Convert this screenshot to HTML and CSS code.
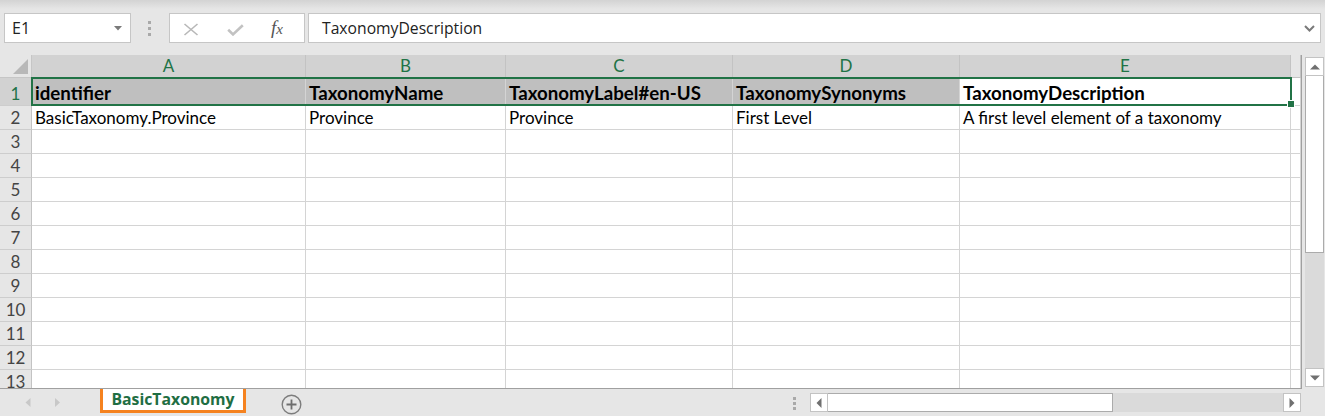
FILE: index.html
```html
<!DOCTYPE html>
<html>
<head>
<meta charset="utf-8">
<title>BasicTaxonomy</title>
<link rel="stylesheet" href="styles.css">
</head>
<body>
<div class="app">
  <div class="topbar">
    <div class="namebox">
      <span>E1</span>
      <svg class="nb-arrow" width="8" height="5" viewBox="0 0 8 5"><polygon points="0,0 8,0 4,4.5" fill="#7a7a7a"/></svg>
    </div>
    <div class="grip"><i></i><i></i><i></i></div>
    <div class="fxgroup">
      <svg class="ic-x" width="16" height="13" viewBox="0 0 16 13"><path d="M1.5 1 L14.5 12 M14.5 1 L1.5 12" stroke="#b8b8b8" stroke-width="1.6" fill="none"/></svg>
      <svg class="ic-check" width="17" height="12" viewBox="0 0 17 12"><path d="M1.2 5.8 L6 10.4 L15.8 1.2" stroke="#c2c2c2" stroke-width="2.6" fill="none"/></svg>
      <span class="fx">f<span class="fxx">x</span></span>
    </div>
    <div class="formula">
      <span>TaxonomyDescription</span>
      <svg width="11" height="7" viewBox="0 0 11 7"><path d="M1 1 L5.5 5.5 L10 1" stroke="#7a7a7a" stroke-width="2" fill="none"/></svg>
    </div>
  </div>

  <div class="main">
    <div class="sheet">
      <div class="grid">
        <div class="corner"><svg width="31" height="22" viewBox="0 0 31 22"><polygon points="13,19 28,19 28,4" fill="#b8b8b8"/></svg></div>
        <div class="ch sel">A</div>
        <div class="ch sel">B</div>
        <div class="ch sel">C</div>
        <div class="ch sel">D</div>
        <div class="ch sel">E</div>
        <div class="ch"></div>

        <div class="rh sel">1</div>
        <div class="c hd fill">identifier</div>
        <div class="c hd fill">TaxonomyName</div>
        <div class="c hd fill">TaxonomyLabel#en-US</div>
        <div class="c hd fill">TaxonomySynonyms</div>
        <div class="c hd">TaxonomyDescription</div>
        <div class="c"></div>

        <div class="rh">2</div>
        <div class="c">BasicTaxonomy.Province</div>
        <div class="c">Province</div>
        <div class="c">Province</div>
        <div class="c">First Level</div>
        <div class="c">A first level element of a taxonomy</div>
        <div class="c"></div>

        <div class="rh">3</div><div class="c"></div><div class="c"></div><div class="c"></div><div class="c"></div><div class="c"></div><div class="c"></div>
        <div class="rh">4</div><div class="c"></div><div class="c"></div><div class="c"></div><div class="c"></div><div class="c"></div><div class="c"></div>
        <div class="rh">5</div><div class="c"></div><div class="c"></div><div class="c"></div><div class="c"></div><div class="c"></div><div class="c"></div>
        <div class="rh">6</div><div class="c"></div><div class="c"></div><div class="c"></div><div class="c"></div><div class="c"></div><div class="c"></div>
        <div class="rh">7</div><div class="c"></div><div class="c"></div><div class="c"></div><div class="c"></div><div class="c"></div><div class="c"></div>
        <div class="rh">8</div><div class="c"></div><div class="c"></div><div class="c"></div><div class="c"></div><div class="c"></div><div class="c"></div>
        <div class="rh">9</div><div class="c"></div><div class="c"></div><div class="c"></div><div class="c"></div><div class="c"></div><div class="c"></div>
        <div class="rh">10</div><div class="c"></div><div class="c"></div><div class="c"></div><div class="c"></div><div class="c"></div><div class="c"></div>
        <div class="rh">11</div><div class="c"></div><div class="c"></div><div class="c"></div><div class="c"></div><div class="c"></div><div class="c"></div>
        <div class="rh">12</div><div class="c"></div><div class="c"></div><div class="c"></div><div class="c"></div><div class="c"></div><div class="c"></div>
        <div class="rh">13</div><div class="c"></div><div class="c"></div><div class="c"></div><div class="c"></div><div class="c"></div><div class="c"></div>
      </div>
      <div class="selection"><div class="handle"></div></div>
    </div>

    <div class="vscroll">
      <div class="sbtn"><svg width="10" height="6" viewBox="0 0 10 6"><polygon points="0,5.5 10,5.5 5,0.5" fill="#707070"/></svg></div>
      <div class="vthumb"></div>
      <div class="vtrack"></div>
      <div class="sbtn"><svg width="10" height="6" viewBox="0 0 10 6"><polygon points="0,0.5 10,0.5 5,5.5" fill="#707070"/></svg></div>
    </div>
  </div>

  <div class="bottombar">
    <div class="nav">
      <svg width="100" height="27" viewBox="0 0 100 27">
        <polygon points="30.5,9 30.5,18 25.5,13.5" fill="#c8c8c8"/>
        <polygon points="55,9 55,18 60,13.5" fill="#c8c8c8"/>
      </svg>
    </div>
    <div class="tab">BasicTaxonomy</div>
    <div class="plus">
      <svg width="21" height="21" viewBox="0 0 21 21"><circle cx="10.5" cy="10.5" r="9.3" fill="none" stroke="#7d7d7d" stroke-width="1.4"/><path d="M10.5 5.5 V15.5 M5.5 10.5 H15.5" stroke="#6e6e6e" stroke-width="1.8"/></svg>
    </div>
    <div class="spacer"></div>
    <div class="hgrip"><i></i><i></i><i></i></div>
    <div class="hscroll">
      <div class="hbtn"><svg width="6" height="10" viewBox="0 0 6 10"><polygon points="5.5,0 5.5,10 0.5,5" fill="#707070"/></svg></div>
      <div class="hthumb"></div>
      <div class="htrack"></div>
      <div class="hbtn"><svg width="6" height="10" viewBox="0 0 6 10"><polygon points="0.5,0 0.5,10 5.5,5" fill="#707070"/></svg></div>
    </div>
  </div>
</div>
</body>
</html>
```

FILE: styles.css
```css
* { box-sizing: border-box; margin: 0; padding: 0; }
html, body { width: 1325px; height: 416px; overflow: hidden; }
body { background: #e6e6e6; font-family: "Lato", "Open Sans", sans-serif; color: #000; }

.app { display: flex; flex-direction: column; width: 1325px; height: 416px; }

/* ---------- formula bar ---------- */
.topbar {
  height: 55px;
  flex: none;
  display: flex;
  align-items: flex-start;
  padding: 13px 4px 0 4px;
  background: linear-gradient(#d3d3d3, #e6e6e6 9px);
}
.namebox {
  width: 127px; height: 30px;
  background: #fff; border: 1px solid #c6c6c6;
  display: flex; align-items: center; justify-content: space-between;
  padding: 0 8px 0 7px;
  font-family: "Open Sans", sans-serif; font-size: 16px; color: #222;
}
.nb-arrow { margin-top: 1px; }
.grip { display: flex; flex-direction: column; gap: 3px; margin: 8px 0 0 17px; }
.grip i, .hgrip i { display: block; width: 3px; height: 3px; background: #a9a9a9; }
.fxgroup {
  width: 136px; height: 30px; margin-left: 18px;
  background: #fff; border: 1px solid #c6c6c6;
  display: flex; align-items: center; padding-left: 13px;
}
.ic-x { margin-top: 3px; }
.ic-check { margin: 3px 0 0 28px; }
.fx {
  margin-left: 27px; margin-top: -1px;
  font-family: "Liberation Serif", serif; font-style: italic; font-size: 19px; color: #555;
}
.fxx { font-size: 15px; }
.formula {
  flex: 1; height: 30px; margin-left: 3px;
  background: #fff; border: 1px solid #c6c6c6;
  display: flex; align-items: center; justify-content: space-between;
  padding: 0 5px 0 13px;
  font-family: "Open Sans", sans-serif; font-size: 15.7px; color: #222;
}

/* ---------- sheet ---------- */
.main { height: 334px; flex: none; display: flex; align-items: flex-start; }
.sheet {
  position: relative;
  width: 1302px; height: 334px;
  background: #fff;
  border-right: 1px solid #a0a0a0;
  border-bottom: 1px solid #a0a0a0;
  overflow: hidden;
}
.grid {
  display: grid;
  grid-template-columns: 32px 274px 200px 227px 227px 331px 10px;
  grid-template-rows: 23px 28px repeat(12, 24px);
}
.grid > div { border-right: 1px solid #d4d4d4; border-bottom: 1px solid #d4d4d4; }
.corner { background: #e6e6e6; border-color: #c6c6c6 !important; }
.corner svg { display: block; }
.ch {
  background: #e6e6e6;
  border-right-color: #c3c3c3 !important; border-bottom-color: #c3c3c3 !important;
  display: flex; align-items: flex-end; justify-content: center;
  padding-bottom: 1px;
  font-size: 17px; color: #444;
}
.rh {
  background: #e6e6e6;
  border-right-color: #c3c3c3 !important; border-bottom-color: #cdcdcd !important;
  display: flex; align-items: flex-end; justify-content: center;
  padding-bottom: 1px;
  font-size: 17px; color: #444;
}
.ch.sel, .rh.sel { background: #d2d2d2; color: #217346; }
.c {
  display: flex; align-items: flex-end;
  padding: 0 3px 1px 3px;
  font-size: 17px; white-space: nowrap; overflow: hidden;
}
.c.hd { font-weight: 700; font-size: 18.7px; padding-bottom: 1px; }
.c.fill { background: #bfbfbf; }

.selection {
  position: absolute; left: 31px; top: 22px;
  width: 1261px; height: 29px;
  border: 2px solid #217346;
}
.handle {
  position: absolute; left: 1255px; top: 22px;
  width: 6px; height: 6px;
  background: #217346; box-shadow: 0 0 0 1px #fff;
}

/* ---------- vertical scrollbar ---------- */
.vscroll {
  width: 19px; height: 330px; margin: 2px 0 0 3px;
  display: flex; flex-direction: column;
  background: #dadada;
}
.sbtn {
  height: 19px; flex: none;
  background: #fff; border: 1px solid #c3c3c3;
  display: flex; align-items: center; justify-content: center;
}
.vthumb { height: 177px; flex: none; background: #fff; border: 1px solid #ababab; border-top: none; }
.vtrack { flex: 1; }

/* ---------- bottom bar ---------- */
.bottombar {
  height: 27px; flex: none;
  display: flex; align-items: flex-start;
  padding-right: 24px;
}
.nav { width: 100px; height: 27px; flex: none; }
.nav svg { display: block; }
.tab {
  width: 146px; height: 32px; flex: none; margin-top: -8px;
  background: #fff; border: 3px solid #f5821f;
  display: flex; align-items: center; justify-content: center;
  font-family: "Open Sans", sans-serif; font-weight: 700; font-size: 15.8px; color: #1f6e43;
  padding-top: 3px;
}
.plus { margin: 5px 0 0 35px; }
.plus svg { display: block; }
.spacer { flex: 1; }
.hgrip { display: flex; flex-direction: column; gap: 2px; margin-top: 8px; }
.hscroll {
  width: 491px; height: 19px; margin: 4px 0 0 14px;
  display: flex; background: #dadada;
}
.hbtn {
  width: 18px; flex: none;
  background: #fff; border: 1px solid #c3c3c3;
  display: flex; align-items: center; justify-content: center;
}
.hthumb { width: 285px; flex: none; background: #fff; border: 1px solid #ababab; border-left: none; }
.htrack { flex: 1; }
```
